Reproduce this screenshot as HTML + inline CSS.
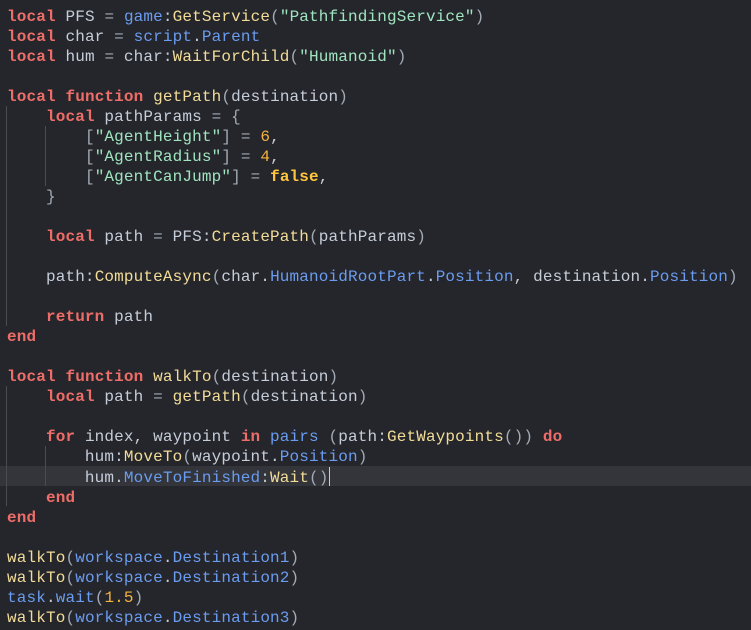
<!DOCTYPE html>
<html><head><meta charset="utf-8"><style>
html,body{margin:0;padding:0;background:#25262b;width:751px;height:630px;overflow:hidden}
pre{margin:0;padding:7px 0 0 7px;font-family:"Liberation Mono",monospace;font-size:16px;line-height:20px;letter-spacing:0.14px;color:#c5cdd9;position:relative;z-index:2}
.k{color:#ee6d68;font-weight:bold}.f{color:#f2dc98}.b{color:#6a9cf0}.s{color:#a0e4bf}.n{color:#f4b33e}.t{color:#ffc53d;font-weight:bold}.o{color:#a2aab5}
.hl{position:absolute;left:0;top:466px;width:751px;height:20px;background:#33353b;z-index:1}
.g{position:absolute;width:1px;background:#4a4c53;z-index:1}
.cur{display:inline-block;width:1px;height:19px;background:#c5cdd9;vertical-align:-4px}
</style></head><body>
<div class="hl"></div>
<div class="g" style="left:6px;top:106px;height:220px"></div>
<div class="g" style="left:6px;top:386px;height:120px"></div>
<div class="g" style="left:45px;top:126px;height:60px"></div>
<div class="g" style="left:45px;top:446px;height:40px"></div>
<pre><span class="k">local</span> PFS <span class="o">=</span> <span class="b">game</span>:<span class="f">GetService</span><span class="o">(</span><span class="s">"PathfindingService"</span><span class="o">)</span>
<span class="k">local</span> char <span class="o">=</span> <span class="b">script</span>.<span class="b">Parent</span>
<span class="k">local</span> hum <span class="o">=</span> char:<span class="f">WaitForChild</span><span class="o">(</span><span class="s">"Humanoid"</span><span class="o">)</span>

<span class="k">local</span> <span class="k">function</span> <span class="f">getPath</span><span class="o">(</span>destination<span class="o">)</span>
    <span class="k">local</span> pathParams <span class="o">=</span> <span class="o">{</span>
        <span class="o">[</span><span class="s">"AgentHeight"</span><span class="o">]</span> <span class="o">=</span> <span class="n">6</span>,
        <span class="o">[</span><span class="s">"AgentRadius"</span><span class="o">]</span> <span class="o">=</span> <span class="n">4</span>,
        <span class="o">[</span><span class="s">"AgentCanJump"</span><span class="o">]</span> <span class="o">=</span> <span class="t">false</span>,
    <span class="o">}</span>

    <span class="k">local</span> path <span class="o">=</span> PFS:<span class="f">CreatePath</span><span class="o">(</span>pathParams<span class="o">)</span>

    path:<span class="f">ComputeAsync</span><span class="o">(</span>char.<span class="b">HumanoidRootPart</span>.<span class="b">Position</span>, destination.<span class="b">Position</span><span class="o">)</span>

    <span class="k">return</span> path
<span class="k">end</span>

<span class="k">local</span> <span class="k">function</span> <span class="f">walkTo</span><span class="o">(</span>destination<span class="o">)</span>
    <span class="k">local</span> path <span class="o">=</span> <span class="f">getPath</span><span class="o">(</span>destination<span class="o">)</span>

    <span class="k">for</span> index, waypoint <span class="k">in</span> <span class="b">pairs</span> <span class="o">(</span>path:<span class="f">GetWaypoints</span><span class="o">())</span> <span class="k">do</span>
        hum:<span class="f">MoveTo</span><span class="o">(</span>waypoint.<span class="b">Position</span><span class="o">)</span>
        hum.<span class="b">MoveToFinished</span>:<span class="f">Wait</span><span class="o">()</span><span class="cur"></span>
    <span class="k">end</span>
<span class="k">end</span>

<span class="f">walkTo</span><span class="o">(</span><span class="b">workspace</span>.<span class="b">Destination1</span><span class="o">)</span>
<span class="f">walkTo</span><span class="o">(</span><span class="b">workspace</span>.<span class="b">Destination2</span><span class="o">)</span>
<span class="b">task</span>.<span class="b">wait</span><span class="o">(</span><span class="n">1.5</span><span class="o">)</span>
<span class="f">walkTo</span><span class="o">(</span><span class="b">workspace</span>.<span class="b">Destination3</span><span class="o">)</span>
<span class="f">walkTo</span><span class="o">(</span><span class="b">workspace</span>.<span class="b">Destination4</span><span class="o">)</span>
</pre>
</body></html>
